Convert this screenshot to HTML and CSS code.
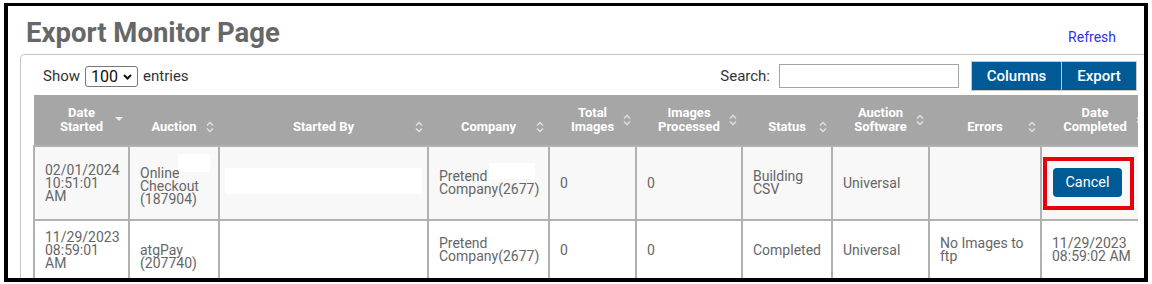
FILE: index.html
```html
<!DOCTYPE html>
<html lang="en">
<head>
    <meta charset="UTF-8">
    <title>Export Monitor Page</title>
    <link rel="stylesheet" href="styles.css">
</head>
<body>
    <div class="frame">
        <div class="page-head">
            <h1>Export Monitor Page</h1>
            <a href="#" class="refresh">Refresh</a>
        </div>

        <div class="panel">
            <div class="dt-wrap">
                <div class="dt-toolbar">
                    <label class="dt-length">Show
                        <span class="select-box">
                            <select>
                                <option>100</option>
                            </select>
                            <svg class="select-arrow" width="9" height="6" viewBox="0 0 9 6"><polyline points="1,1 4.5,4.5 8,1" fill="none" stroke="#111" stroke-width="2"/></svg>
                        </span>
                        entries</label>
                    <div class="dt-right">
                        <label class="dt-search">Search: <input type="search"></label>
                        <div class="dt-buttons">
                            <button class="btn-columns">Columns</button>
                            <button class="btn-export">Export</button>
                        </div>
                    </div>
                </div>

                <div class="dt-scroll">
                    <table>
                        <colgroup>
                            <col class="c-date">
                            <col class="c-auction">
                            <col class="c-user">
                            <col class="c-company">
                            <col class="c-total">
                            <col class="c-processed">
                            <col class="c-status">
                            <col class="c-software">
                            <col class="c-errors">
                            <col class="c-done">
                        </colgroup>
                        <thead>
                            <tr>
                                <th><div class="th-in">Date<br>Started<span class="sort-desc"></span></div></th>
                                <th><div class="th-in">Auction<svg class="sort" width="10" height="14" viewBox="0 0 10 14"><polyline points="2,5.5 5,2.5 8,5.5"/><polyline points="2,8.5 5,11.5 8,8.5"/></svg></div></th>
                                <th><div class="th-in">Started By<svg class="sort" width="10" height="14" viewBox="0 0 10 14"><polyline points="2,5.5 5,2.5 8,5.5"/><polyline points="2,8.5 5,11.5 8,8.5"/></svg></div></th>
                                <th><div class="th-in">Company<svg class="sort" width="10" height="14" viewBox="0 0 10 14"><polyline points="2,5.5 5,2.5 8,5.5"/><polyline points="2,8.5 5,11.5 8,8.5"/></svg></div></th>
                                <th><div class="th-in">Total<br>Images<svg class="sort" width="10" height="14" viewBox="0 0 10 14"><polyline points="2,5.5 5,2.5 8,5.5"/><polyline points="2,8.5 5,11.5 8,8.5"/></svg></div></th>
                                <th><div class="th-in">Images<br>Processed<svg class="sort" width="10" height="14" viewBox="0 0 10 14"><polyline points="2,5.5 5,2.5 8,5.5"/><polyline points="2,8.5 5,11.5 8,8.5"/></svg></div></th>
                                <th><div class="th-in">Status<svg class="sort" width="10" height="14" viewBox="0 0 10 14"><polyline points="2,5.5 5,2.5 8,5.5"/><polyline points="2,8.5 5,11.5 8,8.5"/></svg></div></th>
                                <th><div class="th-in">Auction<br>Software<svg class="sort" width="10" height="14" viewBox="0 0 10 14"><polyline points="2,5.5 5,2.5 8,5.5"/><polyline points="2,8.5 5,11.5 8,8.5"/></svg></div></th>
                                <th><div class="th-in">Errors<svg class="sort" width="10" height="14" viewBox="0 0 10 14"><polyline points="2,5.5 5,2.5 8,5.5"/><polyline points="2,8.5 5,11.5 8,8.5"/></svg></div></th>
                                <th><div class="th-in">Date<br>Completed<svg class="sort" width="10" height="14" viewBox="0 0 10 14"><polyline points="2,5.5 5,2.5 8,5.5"/><polyline points="2,8.5 5,11.5 8,8.5"/></svg></div></th>
                            </tr>
                        </thead>
                        <tbody>
                            <tr class="row-odd">
                                <td>02/01/2024<br>10:51:01<br>AM</td>
                                <td><div class="blank-line"><span class="mask-auction"></span></div>Online<br>Checkout<br>(187904)</td>
                                <td class="user"><div class="mask-user"></div></td>
                                <td class="company">Pretend<br>Company(2677)<span class="mask-company"></span></td>
                                <td>0</td>
                                <td>0</td>
                                <td>Building<br>CSV</td>
                                <td>Universal</td>
                                <td></td>
                                <td class="action">
                                    <span class="callout"><button class="btn-cancel">Cancel</button></span>
                                </td>
                            </tr>
                            <tr class="row-even">
                                <td>11/29/2023<br>08:59:01<br>AM</td>
                                <td><div class="blank-line"></div>atgPay<br>(207740)</td>
                                <td class="user"></td>
                                <td class="company">Pretend<br>Company(2677)</td>
                                <td>0</td>
                                <td>0</td>
                                <td>Completed</td>
                                <td>Universal</td>
                                <td>No Images to<br>ftp</td>
                                <td>11/29/2023<br>08:59:02 AM</td>
                            </tr>
                        </tbody>
                    </table>
                </div>
            </div>
        </div>
    </div>
</body>
</html>
```

FILE: styles.css
```css
body {
    margin: 0;
    padding: 3px 0 0 4px;
    background-color: #fff;
    font-family: Roboto, "Liberation Sans", sans-serif;
    color: #333;
}

.frame {
    width: 1144px;
    height: 279px;
    box-sizing: border-box;
    border: 4px solid #000;
    border-top-width: 3px;
    overflow: hidden;
    background-color: #fff;
}

.page-head {
    display: flex;
    justify-content: space-between;
    align-items: baseline;
    padding: 11px 28px 0 18px;
}

h1 {
    margin: 0;
    font-size: 27.5px;
    line-height: 32px;
    font-weight: 700;
    color: #676767;
}

.refresh {
    font-size: 14px;
    color: #3232e6;
    text-decoration: none;
}

.panel {
    margin: 5px -20px 0 12px;
    border: 1px solid #c6c6c6;
    border-right: none;
    border-bottom: none;
    border-radius: 5px 0 0 0;
    height: 240px;
}

.dt-wrap {
    margin-left: 12px;
    width: 1105px;
}

.dt-toolbar {
    display: flex;
    justify-content: space-between;
    align-items: center;
    height: 30px;
    margin: 6px 1px 4px 0;
    font-size: 15px;
    color: #333;
}

.dt-length {
    display: flex;
    align-items: center;
    margin-left: 10px;
}

.select-box {
    position: relative;
    display: inline-block;
    margin: 0 5px;
}

.select-box select {
    appearance: none;
    width: 53px;
    height: 21px;
    padding: 0 0 0 5px;
    border: 1px solid #777;
    border-radius: 3px;
    background-color: #fff;
    font-family: inherit;
    font-size: 16px;
    color: #111;
    display: block;
}

.select-arrow {
    position: absolute;
    right: 6px;
    top: 8px;
}

.dt-right {
    display: flex;
    align-items: center;
}

.dt-search {
    display: flex;
    align-items: center;
}

.dt-search input {
    width: 180px;
    height: 24px;
    box-sizing: border-box;
    margin-left: 9px;
    border: 1px solid #a4a4a4;
    border-radius: 0;
}

.dt-buttons {
    display: flex;
    margin-left: 12px;
}

.dt-buttons button {
    height: 30px;
    border: 1px solid #c9c9c9;
    background-color: #005a96;
    color: #fff;
    font-family: inherit;
    font-size: 15px;
    font-weight: 500;
    padding: 0;
}

.btn-columns {
    width: 91px;
}

.btn-export {
    width: 75px;
    border-left: none !important;
}

.dt-scroll {
    overflow: hidden;
}

table {
    width: 1115px;
    table-layout: fixed;
    border-collapse: collapse;
}

.c-date { width: 95px; }
.c-auction { width: 90px; }
.c-user { width: 209px; }
.c-company { width: 121px; }
.c-total { width: 87px; }
.c-processed { width: 106px; }
.c-status { width: 90px; }
.c-software { width: 97px; }
.c-errors { width: 112px; }
.c-done { width: 108px; }

thead tr {
    height: 51px;
}

th {
    background-color: #a6a6a6;
    color: #fff;
    font-size: 13px;
    font-weight: 700;
    line-height: 14px;
    text-align: center;
    vertical-align: bottom;
    padding: 0 4px 11px;
}

.th-in {
    position: relative;
}

.sort {
    position: absolute;
    right: 0;
    top: 50%;
    transform: translateY(-50%);
    fill: none;
    stroke: #e2e2e2;
    stroke-width: 1.4;
}

.sort-desc {
    position: absolute;
    right: 2px;
    top: 50%;
    margin-top: -3px;
    border-left: 4px solid transparent;
    border-right: 4px solid transparent;
    border-top: 4px solid #ececec;
}

td {
    border: 2px solid #b1b1b1;
    padding: 0 10px;
    font-size: 14px;
    line-height: 13px;
    color: #666;
    vertical-align: middle;
}

.row-odd {
    height: 74px;
    background-color: #f8f8f8;
}

.row-even {
    height: 60px;
    background-color: #fff;
}

.blank-line {
    height: 13px;
}

.mask-auction {
    display: block;
    width: 32px;
    height: 18px;
    margin: -6px 0 0 38px;
    background-color: #fff;
}

td.user {
    padding: 0 5px;
}

.mask-user {
    width: 197px;
    height: 26px;
    margin-top: -4px;
    background-color: #fff;
}

td.company {
    position: relative;
}

.mask-company {
    position: absolute;
    left: 60px;
    top: 16px;
    width: 46px;
    height: 16px;
    background-color: #fff;
}

td.action {
    padding: 0 0 0 1px;
}

.callout {
    display: inline-block;
    border: 4px solid #e8000b;
    padding: 7px 8px 9px 6px;
}

.btn-cancel {
    display: block;
    width: 69px;
    height: 29px;
    border: none;
    border-radius: 4px;
    background-color: #005a96;
    color: #fff;
    font-family: inherit;
    font-size: 14.5px;
    padding: 0;
}
```
